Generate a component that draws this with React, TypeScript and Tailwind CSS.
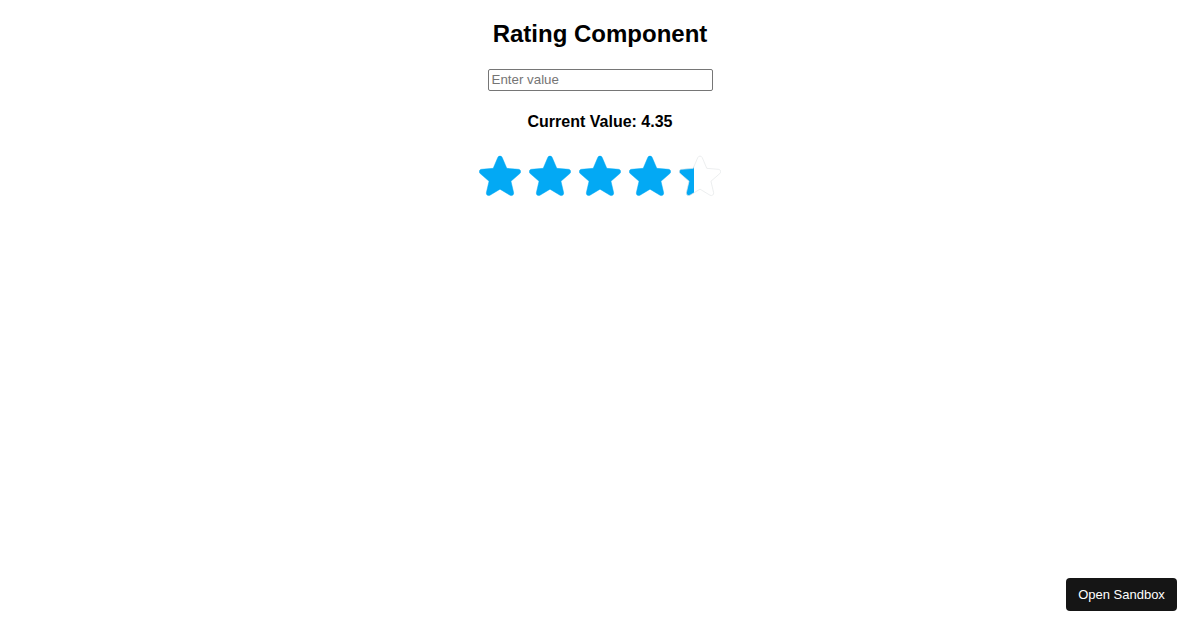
import React, { useState } from "react";

const STAR =
  "M12 17.27l4.15 2.51c.76.46 1.69-.22 1.49-1.08l-1.1-4.72 3.67-3.18c.67-.58.31-1.68-.57-1.75l-4.83-.41-1.89-4.46c-.34-.81-1.5-.81-1.84 0L9.19 8.63l-4.83.41c-.88.07-1.24 1.17-.57 1.75l3.67 3.18-1.1 4.72c-.2.86.73 1.54 1.49 1.08l4.15-2.5z";

function Star({ fill, id }: { fill: number; id: string }) {
  const pct = `${Math.round(fill * 100)}%`;
  return (
    <svg width="42" height="44" viewBox="3.3 2.3 17.4 18.2" className="block">
      <defs>
        <linearGradient id={id} x1="0" x2="1" y1="0" y2="0">
          <stop offset={pct} stopColor="#03a9f4" />
          <stop offset={pct} stopColor="#ffffff" />
        </linearGradient>
      </defs>
      <path
        d={STAR}
        fill={`url(#${id})`}
        stroke={fill >= 1 ? "#03a9f4" : "#e3e6e8"}
        strokeWidth={fill >= 1 ? 0.2 : 0.28}
        strokeLinejoin="round"
      />
    </svg>
  );
}

export default function App() {
  const [v, setV] = useState("");
  const value = 4.35;
  const fills = [0, 1, 2, 3, 4].map((i) => Math.max(0, Math.min(1, value - i)));
  return (
    <div
      className="min-h-screen bg-white text-black flex flex-col items-center"
      style={{ fontFamily: '"Liberation Sans", Arial, sans-serif' }}
    >
      <h1 className="mt-[20px] text-[24px] leading-[28px] font-bold">Rating Component</h1>
      <input
        value={v}
        onChange={(e) => setV(e.target.value)}
        placeholder="Enter value"
        className="mt-[21px] w-[225px] h-[22px] border border-[#767676] rounded-[2px] px-[3px] pb-[1px] text-[13.33px] placeholder:text-[#757575] outline-none"
        style={{ fontFamily: '"Liberation Sans", Arial, sans-serif' }}
      />
      <h3 className="mt-[22px] text-[16px] leading-[18px] font-bold">Current Value: 4.35</h3>
      <div className="mt-[22px] flex gap-[8px]">
        {fills.map((f, i) => (
          <Star key={i} fill={f} id={`g${i}`} />
        ))}
      </div>
      <button
        className="fixed bottom-[19px] right-[23px] w-[111px] h-[33px] bg-[#151515] text-white text-[13px] rounded-[4px]"
        style={{ fontFamily: '"Liberation Sans", Arial, sans-serif' }}
      >
        Open Sandbox
      </button>
    </div>
  );
}
